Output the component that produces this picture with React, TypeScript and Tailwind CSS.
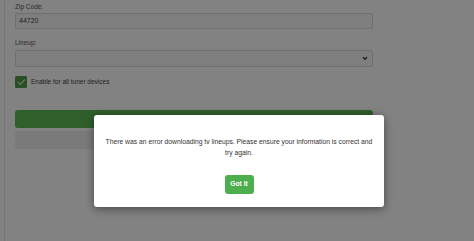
import React from "react";

export default function App() {
  return (
    <div
      className="relative h-[241px] w-[474px] overflow-hidden bg-white"
      style={{ fontFamily: '"Liberation Sans", Arial, sans-serif' }}
    >
      <div className="ml-[4px] h-full border-l border-[#e6e6e6] pl-[10px] pt-[3px]">
        <div className="w-[358px]">
          <div className="text-[6.5px] leading-[8px] text-[#555]">Zip Code:</div>
          <div className="mt-[2px] flex h-[16px] items-center rounded-[2px] border border-[#d8d8d8] bg-[#fafafa] px-[3px] text-[7px] text-[#444]">
            44720
          </div>
          <div className="mt-[10px] text-[6.5px] leading-[8px] text-[#555]">Lineup:</div>
          <div className="mt-[3px] flex h-[17px] items-center justify-end rounded-[2px] border border-[#d8d8d8] bg-[#fafafa] pr-[4px]">
            <svg width="6" height="5" viewBox="0 0 6 5">
              <path d="M1 1.2 L3 3.4 L5 1.2" fill="none" stroke="#222" strokeWidth="1.2" />
            </svg>
          </div>
          <div className="mt-[9px] flex items-center gap-[4px]">
            <div className="flex h-[12px] w-[12px] items-center justify-center rounded-[1.5px] bg-[#4f9a48]">
              <svg width="9" height="8" viewBox="0 0 9 8">
                <path d="M1 4.2 L3.3 6.4 L8 1.3" fill="none" stroke="#dff0dc" strokeWidth="1.1" />
              </svg>
            </div>
            <span className="text-[6.5px] text-[#444]">Enable for all tuner devices</span>
          </div>
          <div className="mt-[22px] h-[18px] rounded-[3px] bg-[#5dbb53]" />
          <div className="mt-[3px] h-[18px] rounded-[3px] bg-[#f0f0f0]" />
        </div>
      </div>

      <div className="absolute inset-0 bg-black/[0.49]" />

      <div className="absolute left-[94px] top-[115px] flex h-[92px] w-[290px] flex-col items-center rounded-[3px] bg-white pt-[21px] shadow-[0_2px_8px_rgba(0,0,0,0.45)]">
        <p className="w-[274px] text-center text-[6.75px] leading-[11px] text-[#333]">
          There was an error downloading tv lineups. Please ensure your information is correct and try again.
        </p>
        <button className="mt-[17px] flex h-[19px] w-[29px] items-center justify-center rounded-[3px] bg-[#4cae4c] text-[6.8px] font-bold text-white">
          Got It
        </button>
      </div>
    </div>
  );
}
